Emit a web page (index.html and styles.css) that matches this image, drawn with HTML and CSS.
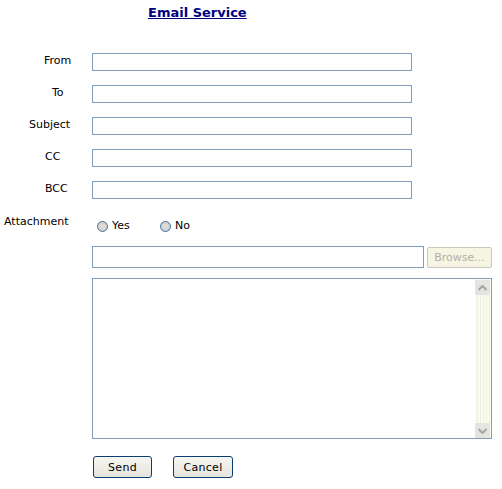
FILE: index.html
```html
<!DOCTYPE html>
<html>
<head>
<meta charset="utf-8">
<title>Email Service</title>
<link rel="stylesheet" href="styles.css">
</head>
<body>
<div class="page">
  <h1 class="title"><a href="#" class="title-link">Email Service</a></h1>
  <form class="mail-form">
    <div class="row">
      <label class="label label-from">From</label>
      <input class="text-input" type="text">
    </div>
    <div class="row">
      <label class="label label-to">To</label>
      <input class="text-input" type="text">
    </div>
    <div class="row">
      <label class="label label-subject">Subject</label>
      <input class="text-input" type="text">
    </div>
    <div class="row">
      <label class="label label-cc">CC</label>
      <input class="text-input" type="text">
    </div>
    <div class="row">
      <label class="label label-bcc">BCC</label>
      <input class="text-input" type="text">
    </div>
    <div class="row row-attach">
      <span class="label label-attach">Attachment</span>
      <div class="options">
        <label class="option option-yes"><span class="radio"></span><span>Yes</span></label>
        <label class="option"><span class="radio"></span><span>No</span></label>
      </div>
    </div>
    <div class="row row-file">
      <span class="label"></span>
      <div class="file-field">
        <input class="file-input" type="text">
        <span class="browse">Browse...</span>
      </div>
    </div>
    <div class="row row-body">
      <span class="label"></span>
      <div class="body-box">
        <textarea class="body-text"></textarea>
        <div class="scrollbar">
          <div class="scroll-btn">
            <svg width="9" height="6" viewBox="0 0 9 6"><path d="M0.5 5 L4.5 1 L8.5 5" fill="none" stroke="#a4a4a4" stroke-width="2"/></svg>
          </div>
          <div class="scroll-track"></div>
          <div class="scroll-btn">
            <svg width="9" height="6" viewBox="0 0 9 6"><path d="M0.5 1 L4.5 5 L8.5 1" fill="none" stroke="#a4a4a4" stroke-width="2"/></svg>
          </div>
        </div>
      </div>
    </div>
    <div class="row row-actions">
      <span class="label"></span>
      <div class="actions">
        <button type="button" class="btn btn-send">Send</button>
        <button type="button" class="btn btn-cancel">Cancel</button>
      </div>
    </div>
  </form>
</div>
</body>
</html>
```
FILE: styles.css
```css
html, body {
  margin: 0;
  padding: 0;
  background: #ffffff;
}
body {
  font-family: "DejaVu Sans", Verdana, sans-serif;
  font-size: 11px;
  color: #000000;
}
.page {
  padding-top: 5px;
}
.title {
  margin: 0;
  padding-left: 148px;
  font-size: 13px;
  line-height: 16px;
  font-weight: bold;
}
.title-link {
  color: #000080;
  text-decoration: underline;
}
.mail-form {
  display: flex;
  flex-direction: column;
  margin-top: 32px;
}
.row {
  display: flex;
  align-items: flex-start;
  margin-bottom: 14px;
}
.label {
  flex: 0 0 auto;
  width: 92px;
  box-sizing: border-box;
  line-height: 16px;
  white-space: nowrap;
}
.label-from { padding-left: 44px; }
.label-to { padding-left: 52px; }
.label-subject { padding-left: 29px; }
.label-cc { padding-left: 45px; }
.label-bcc { padding-left: 45px; }
.label-attach { padding-left: 4px; line-height: 13px; }
.text-input {
  width: 320px;
  height: 18px;
  box-sizing: border-box;
  margin: 0;
  border: 1px solid #7f9db9;
  padding: 1px 3px;
  font: inherit;
  background: #ffffff;
}
.row-attach {
  margin-top: 2px;
  margin-bottom: 14px;
}
.options {
  display: flex;
  padding-left: 5px;
  padding-top: 4px;
}
.option {
  display: flex;
  align-items: center;
  gap: 4px;
  line-height: 13px;
}
.option-yes {
  width: 63px;
}
.radio {
  width: 11px;
  height: 11px;
  box-sizing: border-box;
  border: 1px solid #3f6ea5;
  border-radius: 50%;
  background: radial-gradient(circle at 50% 50%, #e2e2dc 0%, #d4d4cc 60%, #c6c8d0 100%);
  margin-top: 1px;
}
.row-file {
  margin-bottom: 10px;
}
.file-field {
  display: flex;
  align-items: flex-start;
  gap: 3px;
}
.file-input {
  width: 332px;
  height: 22px;
  box-sizing: border-box;
  margin: 0;
  border: 1px solid #7f9db9;
  font: inherit;
}
.browse {
  margin-top: 1px;
  width: 65px;
  height: 21px;
  box-sizing: border-box;
  border: 1px solid #cac8bb;
  border-radius: 2px;
  background: #f6f5e4;
  color: #b2b0a4;
  line-height: 19px;
  text-align: center;
}
.row-body {
  margin-bottom: 17px;
}
.body-box {
  display: flex;
  width: 400px;
  height: 161px;
  box-sizing: border-box;
  border: 1px solid #7f9db9;
  background: #ffffff;
}
.body-text {
  flex: 1 1 auto;
  margin: 0;
  border: 0;
  padding: 2px;
  resize: none;
  outline: none;
  font: inherit;
}
.scrollbar {
  flex: 0 0 16px;
  display: flex;
  flex-direction: column;
  background: #fbfbee;
  padding-top: 1px;
}
.scroll-btn {
  height: 15px;
  width: 15px;
  display: flex;
  align-items: center;
  justify-content: center;
  background: #e4e4e0;
  border: 0;
  box-sizing: border-box;
}
.scroll-track {
  flex: 1 1 auto;
  background: repeating-linear-gradient(90deg, #fbfbee 0 2px, #efefe0 2px 3px);
}
.actions {
  display: flex;
  gap: 21px;
  padding-left: 1px;
}
.btn {
  height: 22px;
  box-sizing: border-box;
  border: 1px solid #0a3d73;
  border-radius: 3px;
  background: linear-gradient(#f6f6f2, #e6e4dc);
  font-family: "DejaVu Sans", Verdana, sans-serif;
  font-size: 11px;
  color: #000000;
  padding: 0;
  letter-spacing: 0.3px;
}
.btn-send { width: 59px; }
.btn-cancel { width: 60px; }
```
